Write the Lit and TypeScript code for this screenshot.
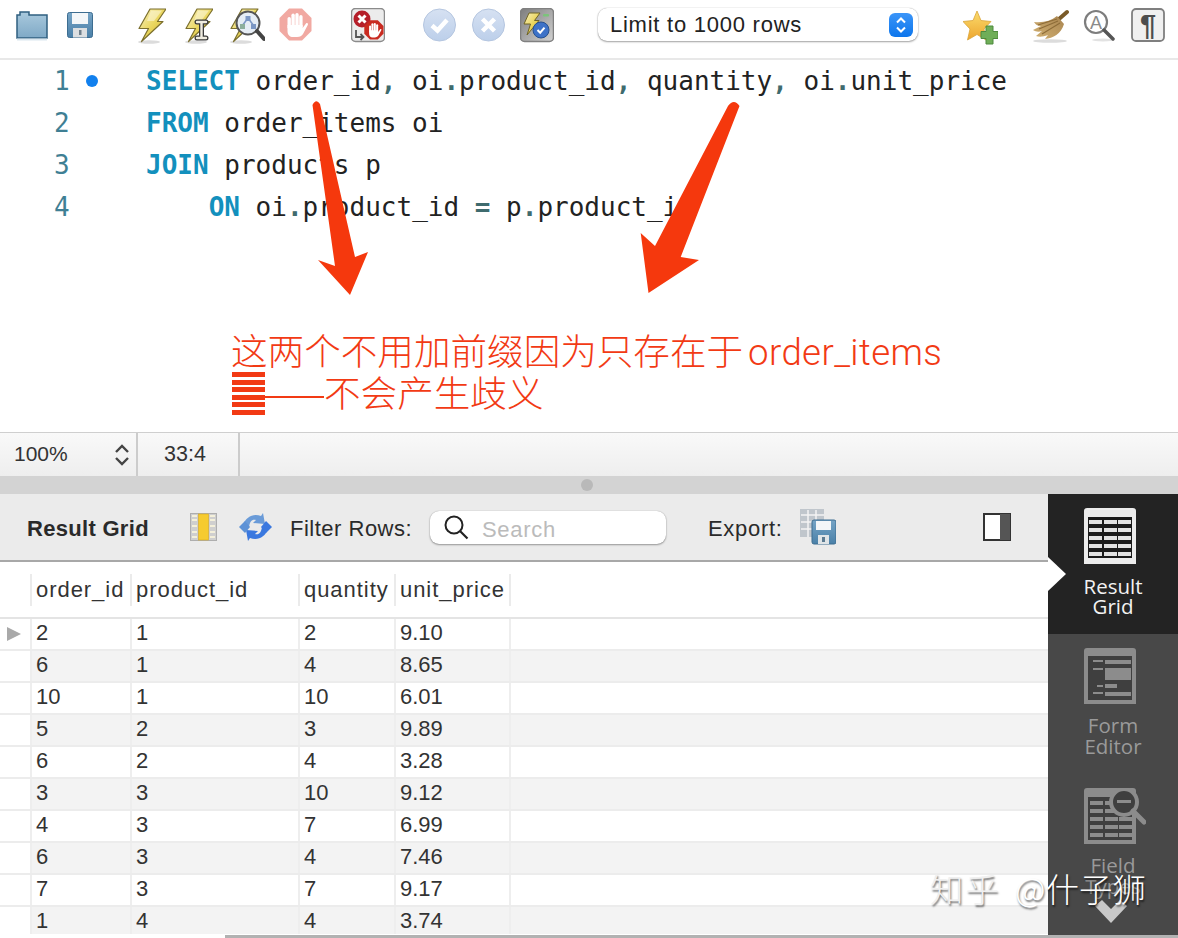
import { LitElement, html, css, svg } from "lit";
import { customElement } from "lit/decorators.js";

const bolt = (extra: unknown = svg``, w = 28) => html`<svg width=${w} height="40" viewBox="0 0 ${w} 40">
  <ellipse cx="11" cy="34" rx="11" ry="1.800" fill="#dcdcdc"/>
  <path d="M12 1H28L19.500 13.500H25L3.500 33.500L10.500 20.500H1Z" fill="url(#bolt)" stroke="#7b6f2e" stroke-width="1.200" stroke-linejoin="round"/>
  <path d="M13 2.500H24L16 13H9Z" fill="#fbf6d6" opacity=".6"/>
  ${extra}</svg>`;

const stopHand = (fill: string, s = 1) => svg`<g transform="scale(${s})">
  <path d="M10 0.500H23L32.500 10V23L23 32.500H10L0.500 23V10Z" fill=${fill}/>
  <g fill="#fff">
    <rect x="8.500" y="9" width="3.400" height="12" rx="1.700"/>
    <rect x="12.400" y="5.500" width="3.400" height="14" rx="1.700"/>
    <rect x="16.300" y="5" width="3.400" height="14" rx="1.700"/>
    <rect x="20.200" y="7" width="3.400" height="13" rx="1.700"/>
    <path d="M8.500 17H23.600V20L27 15.500C28.200 14.500 29.500 15.500 28.800 17L24 26C22.800 28 21 29 18 29H14C11 29 8.500 27 8.500 23Z"/>
  </g>
</g>`;

const circleIcon = (glyph: unknown) => html`<svg width="35" height="40" viewBox="0 0 35 40">
  <circle cx="17.500" cy="17" r="16" fill="url(#disc)" stroke="#b5c6e0"/>
  ${glyph}</svg>`;

const tableCells = (x0: number, y0: number, cols: number[], rows: number, rh: number, fill: string) =>
  Array.from({ length: rows }, (_, r) =>
    cols.map((c) => svg`<rect x=${x0 + c} y=${y0 + r * rh} width="13" height=${rh - 4} fill=${fill}/>`));

const ROWS = [
  ["2", "1", "2", "9.10"], ["6", "1", "4", "8.65"], ["10", "1", "10", "6.01"], ["5", "2", "3", "9.89"],
  ["6", "2", "4", "3.28"], ["3", "3", "10", "9.12"], ["4", "3", "7", "6.99"], ["6", "3", "4", "7.46"],
  ["7", "3", "7", "9.17"], ["1", "4", "4", "3.74"],
];

@customElement("app-root")
export class AppRoot extends LitElement {
  static styles = css`
    :host { display: block; width: 1178px; height: 938px; font-family: "Liberation Sans", Arial, sans-serif; color: #222; }
    .page { position: relative; width: 1178px; height: 938px; overflow: hidden; display: flex; flex-direction: column; background: #fff; }
    svg { display: block; flex: none; }

    .toolbar { flex: none; box-sizing: border-box; height: 60px; border-bottom: 2px solid #e8e8e8; display: flex; align-items: flex-start; padding: 8px 0 0 16px; }
    .m19 { margin-left: 19px; } .m45 { margin-left: 45px; } .m17 { margin-left: 17px; } .m14 { margin-left: 14px; }
    .m39 { margin-left: 39px; } .m37 { margin-left: 37px; } .m35 { margin-left: 35px; } .m16 { margin-left: 16px; }
    .select { margin-left: 44px; width: 320px; height: 33px; box-sizing: border-box; border-radius: 9px; background: #fff; box-shadow: 0 0 1px rgba(0,0,0,.35), 0 1px 2px rgba(0,0,0,.35); display: flex; align-items: center; justify-content: space-between; padding: 0 5px 0 12px; font-size: 22px; letter-spacing: .75px; color: #222; }
    .stepper { width: 24px; height: 24px; border-radius: 6px; background: linear-gradient(#3b95f8, #0d76ec); display: flex; align-items: center; justify-content: center; }

    .editor { height: 372px; flex: none; font-family: "DejaVu Sans Mono", monospace; font-size: 26px; line-height: 42px; }
    .line { display: flex; height: 42px; white-space: pre; }
    .num { width: 85px; padding-left: 54px; box-sizing: border-box; color: #3f7f94; }
    .dotcell { width: 61px; display: flex; align-items: center; }
    .dot { width: 12px; height: 12px; margin-left: 1px; border-radius: 50%; background: #1180ee; }
    .kw { color: #1390bd; font-weight: bold; }
    .pn { color: #3f6b6e; font-weight: bold; }

    .status { height: 44px; flex: none; box-sizing: border-box; border-top: 1px solid #cfcfcf; background: linear-gradient(#f9f9f9, #eeeeee); display: flex; font-size: 21.500px; color: #333; }
    .zoomcell { width: 138px; box-sizing: border-box; border-right: 2px solid #cccccc; display: flex; align-items: center; justify-content: space-between; padding: 0 6px 0 14px; font-size: 21px; }
    .zoomcell span { padding-bottom: 2px; }
    .poscell { width: 102px; box-sizing: border-box; border-right: 2px solid #cccccc; display: flex; align-items: center; padding-left: 26px; }
    .splitter { height: 18px; flex: none; background: #d3d3d3; display: flex; align-items: center; justify-content: center; padding-right: 4px; box-sizing: border-box; }
    .splitter i { width: 12px; height: 12px; border-radius: 50%; background: #b9b9b9; }

    .results { flex: 1; display: flex; min-height: 0; }
    .main { width: 1048px; flex: none; display: flex; flex-direction: column; min-height: 0; }
    .rbar { height: 68px; flex: none; box-sizing: border-box; border-bottom: 2px solid #a8a8a8; background: #ebebeb; display: flex; align-items: center; padding-left: 27px; font-size: 22px; letter-spacing: .5px; color: #2a2a2a; }
    .title { width: 122px; font-weight: bold; letter-spacing: .3px; white-space: nowrap; padding-top: 3px; }
    .ml41 { margin-left: 41px; } .ml22 { margin-left: 22px; } .ml18 { margin-left: 18px; } .ml147 { margin-left: 147px; }
    .filter { width: 121px; white-space: nowrap; padding-top: 3px; }
    .search { margin-left: 19px; width: 236px; height: 33px; box-sizing: border-box; border-radius: 9px; background: #fff; box-shadow: 0 0 1px rgba(0,0,0,.3), 0 1px 2px rgba(0,0,0,.35); display: flex; align-items: center; gap: 13px; padding-left: 13px; color: #bbbbbb; letter-spacing: .7px; }
    .search span { padding-top: 5px; }
    .export { margin-left: 42px; width: 74px; white-space: nowrap; padding-top: 3px; letter-spacing: .7px; }

    .ghead { height: 55px; flex: none; box-sizing: border-box; padding-top: 12px; display: grid; grid-template-columns: 30px 100px 168px 96px 115px 1fr; font-size: 22px; letter-spacing: .95px; color: #333; }
    .ghead div { height: 32px; line-height: 32px; }
    .ghead div + div { border-left: 2px solid #ebebeb; padding-left: 4px; white-space: nowrap; }
    .gbody { height: 317px; flex: none; overflow: hidden; }
    .row { height: 32px; box-sizing: border-box; border-top: 2px solid #ececec; display: grid; grid-template-columns: 30px 100px 168px 96px 115px 1fr; font-size: 22px; line-height: 28px; color: #333; }
    .row.first { border-top-color: #e4e4e4; }
    .row div + div { border-left: 2px solid #eeeeee; padding-left: 4px; }
    .row.alt div + div { background: #f3f3f3; }
    .gutter { display: flex; align-items: center; padding: 0 0 0 7px; }
    .tri { width: 0; height: 0; border-left: 14px solid #a9a9a9; border-top: 7px solid transparent; border-bottom: 7px solid transparent; }

    .side { position: relative; width: 130px; flex: none; background: #484848; overflow: hidden; font-family: "Open Sans", sans-serif; font-size: 20.500px; color: #9a9a9a; text-align: center; }
    .sec { height: 140px; box-sizing: border-box; padding-top: 14px; display: flex; flex-direction: column; align-items: center; }
    .sec.on { background: #232323; color: #f2f2f2; }
    .sec svg { margin-right: 6px; }
    .sec svg.wide { margin-right: 0; margin-left: 4px; }
    .lab { margin-top: 11px; line-height: 21px; }
    .sec.on .lab { margin-top: 12px; line-height: 20px; }
    .notch { position: absolute; left: 0; top: 63px; width: 18px; height: 34px; background: #fff; clip-path: polygon(0 0, 100% 50%, 0 100%); }
    .chev { position: absolute; left: 47px; top: 406px; }

    .scroll { position: absolute; left: 225px; right: 0; bottom: 0; height: 3px; background: #b2b2b2; }
    .arrows { position: absolute; left: 0; top: 0; pointer-events: none; }

    .note { position: absolute; left: 231px; top: 332px; font-family: "Liberation Sans", "Noto Sans CJK SC", sans-serif; font-weight: 300; font-size: 36.600px; line-height: 42px; color: #f23a14; white-space: nowrap; }
    .note .l1 { height: 42px; }
    .note .lat { margin-left: 5px; font-family: Roboto, "Liberation Sans", sans-serif; font-weight: 300; letter-spacing: .4px; }
    .note .l2 { display: flex; align-items: center; height: 42px; }
    .bars { width: 33px; height: 43px; flex: none; margin-left: 1px; margin-bottom: 4px; background: repeating-linear-gradient(#f23a14 0 5px, #fff 5px 7.600px); }
    .dash { width: 59px; height: 2px; flex: none; margin-top: 4px; background: #f23a14; }

    .mark { position: absolute; left: 930px; top: 867px; display: flex; font-family: "Noto Sans CJK SC", sans-serif; font-weight: 300; font-size: 33.500px; line-height: 42px; color: #fff; text-shadow: 1px 2px 2px rgba(0,0,0,.6); white-space: nowrap; }
    .mark .zh { letter-spacing: 2px; margin-right: 14px; color: #f0f0f0; }
  `;

  render() {
    return html`<div class="page">
      <div class="toolbar">
        <svg width="32" height="40" viewBox="0 0 32 40">
          <path d="M1 7H4V4H13V7H31V30H1Z" fill="url(#folder)" stroke="#2f5f80" stroke-width="1.500"/>
          <rect x="1" y="30.500" width="30" height="2" fill="#dbe7ef"/>
        </svg>
        <svg class="m19" width="26" height="40" viewBox="0 0 26 40">
          <rect x="0.500" y="4.500" width="25" height="25" rx="2" fill="url(#floppy)" stroke="#3d6d90"/>
          <rect x="5" y="5" width="16" height="11" fill="#f3f6f8"/>
          <rect x="6" y="20" width="14" height="9.500" fill="#dcdfe1"/>
          <rect x="12" y="22" width="2.500" height="5" fill="#70808c"/>
        </svg>
        ${this.lightning()}
        <svg class="m39" width="34" height="40" viewBox="0 0 34 40">
          <rect x="0.500" y="0.500" width="33" height="33" rx="4" fill="#ececec" stroke="#8b8b8b" stroke-width="1.500"/>
          <circle cx="11" cy="11" r="8.500" fill="#b51f2a"/>
          <path d="M7.500 7.500l7 7M14.500 7.500l-7 7" stroke="#fff" stroke-width="3"/>
          <g transform="translate(13 12)">${stopHand("#c92a20", 0.6)}</g>
          <path d="M5 22v7h7M9.500 26l3 3-3 3" fill="none" stroke="#555" stroke-width="1.800"/>
        </svg>
        <div class="m37">${circleIcon(svg`<path d="M10 17.500l5.500 5L25 12" fill="none" stroke="#fff" stroke-width="4.500"/>`)}</div>
        <div class="m14">${circleIcon(svg`<path d="M11.500 11l12 12M23.500 11l-12 12" fill="none" stroke="#fff" stroke-width="4.500"/>`)}</div>
        <svg class="m14" width="34" height="40" viewBox="0 0 34 40">
          <rect x="0.500" y="0.500" width="33" height="33" rx="4" fill="url(#auto)" stroke="#808080" stroke-width="1.500"/>
          <path d="M9 5H20L14.500 12.500H19L7 27L10.500 16H4Z" fill="url(#bolt)" stroke="#6f6426"/>
          <circle cx="21" cy="22" r="8" fill="#3d72c8" stroke="#27518f"/>
          <path d="M17.500 22l2.700 2.700 4.300-5" fill="none" stroke="#fff" stroke-width="2"/>
          <rect x="23" y="6" width="6" height="2.500" rx="1" fill="#7bc47a"/>
        </svg>
        <div class="select"><span>Limit to 1000 rows</span>
          <span class="stepper"><svg width="12" height="18" viewBox="0 0 12 18"><path d="M2 6.500L6 2.500L10 6.500M2 11.500L6 15.500L10 11.500" fill="none" stroke="#fff" stroke-width="2"/></svg></span>
        </div>
        <svg class="m45" width="35" height="40" viewBox="0 0 35 40">
          <path d="M14 3L18 12.500L28 13.500L21 21L23 32L14 26.500L4.500 32L7 21L0 13.500L10 12.500Z" fill="url(#star)" stroke="#d9a53a" stroke-width=".8"/>
          <path d="M23 18h7v5.500h5v7h-5v5.500h-7v-5.500h-5v-7h5z" fill="#6fae58" stroke="#4f8a3f"/>
        </svg>
        <svg class="m35" width="36" height="40" viewBox="0 0 36 40">
          <ellipse cx="17" cy="33" rx="17" ry="1.800" fill="#dcdcdc"/>
          <path d="M26 11L34 4" stroke="#7a5a28" stroke-width="4" stroke-linecap="round"/>
          <path d="M24 8L31 16C28 26 20 30 12 31L15 27C10 29 6 29 3 28L9 23C6 24 3 24 0 22L8 18C5 18 3 17 1 14C10 15 18 13 24 8Z" fill="url(#broom)"/>
          <path d="M9 26L27 15M6 21L25 13M5 17L24 11" stroke="#8d6c38" stroke-width="1.100"/>
        </svg>
        <svg class="m14" width="32" height="40" viewBox="0 0 32 40">
          <ellipse cx="20" cy="32" rx="11" ry="1.500" fill="#e2e2e2"/>
          <circle cx="13" cy="14" r="11" fill="#fff" stroke="#7d7d7d" stroke-width="2.200"/>
          <text x="13" y="20.500" text-anchor="middle" font-family="Liberation Sans" font-size="18" fill="#8a8a8a">A</text>
          <path d="M21 22L30 31" stroke="#555" stroke-width="3.500" stroke-linecap="round"/>
        </svg>
        <svg class="m16" width="34" height="40" viewBox="0 0 34 40">
          <rect x="1" y="1" width="32" height="32" rx="4" fill="#f0f0f0" stroke="#7f7f7f" stroke-width="1.800"/>
          <text x="17" y="27" text-anchor="middle" font-family="Liberation Sans" font-weight="bold" font-size="29" fill="#4d4d4d">¶</text>
        </svg>
      </div>

      <div class="editor">
        <div class="line"><span class="num">1</span><span class="dotcell"><i class="dot"></i></span><span><span class="kw">SELECT</span> order_id<span class="pn">,</span> oi<span class="pn">.</span>product_id<span class="pn">,</span> quantity<span class="pn">,</span> oi<span class="pn">.</span>unit_price</span></div>
        <div class="line"><span class="num">2</span><span class="dotcell"></span><span><span class="kw">FROM</span> order_items oi</span></div>
        <div class="line"><span class="num">3</span><span class="dotcell"></span><span><span class="kw">JOIN</span> products p</span></div>
        <div class="line"><span class="num">4</span><span class="dotcell"></span><span>    <span class="kw">ON</span> oi<span class="pn">.</span>product_id <span class="pn">=</span> p<span class="pn">.</span>product_id</span></div>
      </div>

      <div class="status">
        <div class="zoomcell"><span>100%</span>
          <svg width="16" height="24" viewBox="0 0 16 24"><path d="M2 9L8 3L14 9M2 15L8 21L14 15" fill="none" stroke="#444" stroke-width="2.400"/></svg>
        </div>
        <div class="poscell">33:4</div>
      </div>
      <div class="splitter"><i></i></div>

      <div class="results">
        <div class="main">
          <div class="rbar">
            <span class="title">Result Grid</span>
            <svg class="ml41" width="27" height="28" viewBox="0 0 27 28">
              <rect x="0.500" y="0.500" width="26" height="27" fill="#cfcfcf" stroke="#aeaeae"/>
              <rect x="8.500" y="1" width="10" height="26" fill="#f6cb2f" stroke="#d8a91c" stroke-width=".6"/>
              <path d="M2 7H7M2 13H7M2 19H7M2 24H7M20 7H25M20 13H25M20 19H25M20 24H25M2 3H7M20 3H25" stroke="#f4f0da" stroke-width="2"/>
            </svg>
            <svg class="ml22" width="33" height="28" viewBox="0 0 33 28">
              <path d="M4 12C7 4 14 0 22 3L24 0L26 11L14 10L17 7C13 6 11 8 10 14Z" fill="#6a9bd8"/>
              <path d="M29 16C26 24 19 28 11 25L9 28L7 17L19 18L16 21C20 22 22 20 23 14Z" fill="#3a78df"/>
              <path d="M0 14L6 8L11 14L6 20Z" fill="#5d92d6"/>
              <path d="M33 14L27 8L22 14L27 20Z" fill="#3a78df"/>
            </svg>
            <span class="filter ml18">Filter Rows:</span>
            <div class="search">
              <svg width="26" height="26" viewBox="0 0 26 26"><circle cx="11" cy="11" r="8.500" fill="none" stroke="#222" stroke-width="2"/><path d="M17 17L24.500 24.500" stroke="#222" stroke-width="2.200"/></svg>
              <span>Search</span>
            </div>
            <span class="export">Export:</span>
            <svg class="ml18" width="36" height="36" viewBox="0 0 36 36">
              <rect x="0" y="0" width="24" height="28" fill="#c0c6cc"/>
              <path d="M1 6H24M1 13H24M1 20H24M8 1V28M16 1V28" stroke="#f4f4f4" stroke-width="1.500"/>
              <rect x="12" y="11" width="24" height="24" rx="2" fill="url(#floppy)" stroke="#3d6d90"/>
              <rect x="16" y="12" width="15" height="9" fill="#f3f6f8"/>
              <rect x="18" y="26" width="11" height="9" fill="#dfe4e7"/>
              <rect x="22" y="28" width="3" height="5" fill="#5c7b91"/>
            </svg>
            <svg class="ml147" width="28" height="28" viewBox="0 0 28 28">
              <rect x="1" y="1" width="26" height="26" fill="#fff" stroke="#333" stroke-width="2"/>
              <rect x="17" y="1" width="10" height="26" fill="#555"/>
            </svg>
          </div>
          <div class="ghead">
            <div></div><div>order_id</div><div>product_id</div><div>quantity</div><div>unit_price</div><div></div>
          </div>
          <div class="gbody">
            ${ROWS.map((r, i) => html`<div class="row ${i === 0 ? "first" : ""} ${i % 2 ? "alt" : ""}">
              <div class="gutter">${i === 0 ? html`<i class="tri"></i>` : ""}</div>
              ${r.map((c) => html`<div>${c}</div>`)}<div></div>
            </div>`)}
          </div>
        </div>
        <div class="side">
          <div class="sec on">
            <svg width="52" height="56" viewBox="0 0 52 56">
              <path d="M3 0H49a3 3 0 0 1 3 3V56H0V3a3 3 0 0 1 3-3Z" fill="#ececec"/>
              <rect x="4" y="9" width="44" height="41" fill="#1b1b1b"/>
              ${tableCells(5, 12, [0, 15, 29], 5, 8, "#e2e2e2")}
            </svg>
            <div class="lab">Result<br />Grid</div>
          </div>
          <div class="sec">
            <svg width="52" height="56" viewBox="0 0 52 56">
              <path d="M3 0H49a3 3 0 0 1 3 3V56H0V3a3 3 0 0 1 3-3Z" fill="#8c8c8c"/>
              <rect x="4" y="8" width="44" height="44" fill="#3f3f3f"/>
              <g fill="#8c8c8c"><rect x="9" y="12" width="10" height="2"/><rect x="21" y="12" width="26" height="4"/><rect x="9" y="20" width="10" height="2"/><rect x="21" y="20" width="26" height="12"/><rect x="13" y="37" width="6" height="2"/><rect x="21" y="36" width="12" height="4"/><rect x="9" y="44" width="10" height="2"/><rect x="21" y="44" width="26" height="4"/></g>
            </svg>
            <div class="lab">Form<br />Editor</div>
          </div>
          <div class="sec">
            <svg class="wide" width="62" height="56" viewBox="0 0 62 56">
              <path d="M3 0H49a3 3 0 0 1 3 3V56H0V3a3 3 0 0 1 3-3Z" fill="#8c8c8c"/>
              <rect x="4" y="9" width="44" height="43" fill="#3f3f3f"/>
              ${tableCells(6, 13, [0, 15, 29], 5, 8, "#8c8c8c")}
              <circle cx="40" cy="14" r="13" fill="#3f3f3f" stroke="#8c8c8c" stroke-width="4"/>
              <rect x="33" y="12" width="14" height="3" fill="#8c8c8c"/>
              <path d="M49 23L60 34" stroke="#8c8c8c" stroke-width="5" stroke-linecap="round"/>
            </svg>
            <div class="lab">Field<br />Types</div>
          </div>
          <div class="notch"></div>
          <svg class="chev" width="32" height="24" viewBox="0 0 32 24"><path d="M0 6L7 0L16 9L25 0L32 6L16 23Z" fill="#c8c8c8"/></svg>
        </div>
      </div>

      <div class="scroll"></div>

      <div class="note">
        <div class="l1">这两个不用加前缀因为只存在于<span class="lat">order_items</span></div>
        <div class="l2"><i class="bars"></i><i class="dash"></i><span>不会产生歧义</span></div>
      </div>

      <svg class="arrows" width="1178" height="938" viewBox="0 0 1178 938">
        <defs>
          <linearGradient id="bolt" x1="0" y1="0" x2="1" y2="1"><stop offset="0" stop-color="#f8f1c4"/><stop offset=".5" stop-color="#ead65f"/><stop offset="1" stop-color="#cdb028"/></linearGradient>
          <linearGradient id="folder" x1="0" y1="0" x2="0" y2="1"><stop offset="0" stop-color="#a9c9dd"/><stop offset="1" stop-color="#7fa9c6"/></linearGradient>
          <linearGradient id="floppy" x1="0" y1="0" x2="0" y2="1"><stop offset="0" stop-color="#76a4c6"/><stop offset="1" stop-color="#4a80a8"/></linearGradient>
          <linearGradient id="disc" x1="0" y1="0" x2="0" y2="1"><stop offset="0" stop-color="#d6e1f2"/><stop offset="1" stop-color="#bccfea"/></linearGradient>
          <linearGradient id="auto" x1="0" y1="0" x2="1" y2="1"><stop offset="0" stop-color="#7d7d7d"/><stop offset="1" stop-color="#d2d2d2"/></linearGradient>
          <linearGradient id="star" x1="0" y1="0" x2="0" y2="1"><stop offset="0" stop-color="#fbdc6d"/><stop offset="1" stop-color="#eda52e"/></linearGradient>
          <linearGradient id="broom" x1="1" y1="0" x2="0" y2="1"><stop offset="0" stop-color="#a98550"/><stop offset="1" stop-color="#d2b173"/></linearGradient>
        </defs>
        <path d="M312.500 105Q316 98 320 104L355 257L368 252L350 295L318 260L335 266Z" fill="#f5380d"/>
        <path d="M728 106Q734 98 739.500 106L680.700 257L699 260L648.500 293L640.700 233L655 246Z" fill="#f5380d"/>
      </svg>

      <div class="mark"><span class="zh">知乎</span><span>@什子狮</span></div>
    </div>`;
  }

  lightning() {
    return html`
      <div class="m45">${bolt()}</div>
      <div class="m19">${bolt(svg`
        <path d="M12 14h9M12 30h9M16.500 14V30" stroke="#3a3a3a" stroke-width="5" stroke-linecap="round"/>
        <path d="M12 14h9M12 30h9M16.500 14V30" stroke="#efece0" stroke-width="2.400" stroke-linecap="round"/>`)}</div>
      <div class="m17">${bolt(svg`
        <circle cx="18" cy="15" r="11.500" fill="#e6edf5" stroke="#555" stroke-width="2"/>
        <path d="M12 18L18 10L24 18" fill="none" stroke="#7c97c4" stroke-width="1.600"/>
        <rect x="15.500" y="8" width="5" height="5" fill="#7c97c4"/><rect x="10" y="16" width="5" height="5" fill="#8dae9c"/><rect x="21" y="16" width="5" height="5" fill="#7c97c4"/>
        <path d="M27 23L34 31" stroke="#444" stroke-width="4" stroke-linecap="round"/>`, 35)}</div>
      <svg class="m14" width="33" height="40" viewBox="0 0 33 40">${stopHand("#f1a9a2")}</svg>`;
  }
}
